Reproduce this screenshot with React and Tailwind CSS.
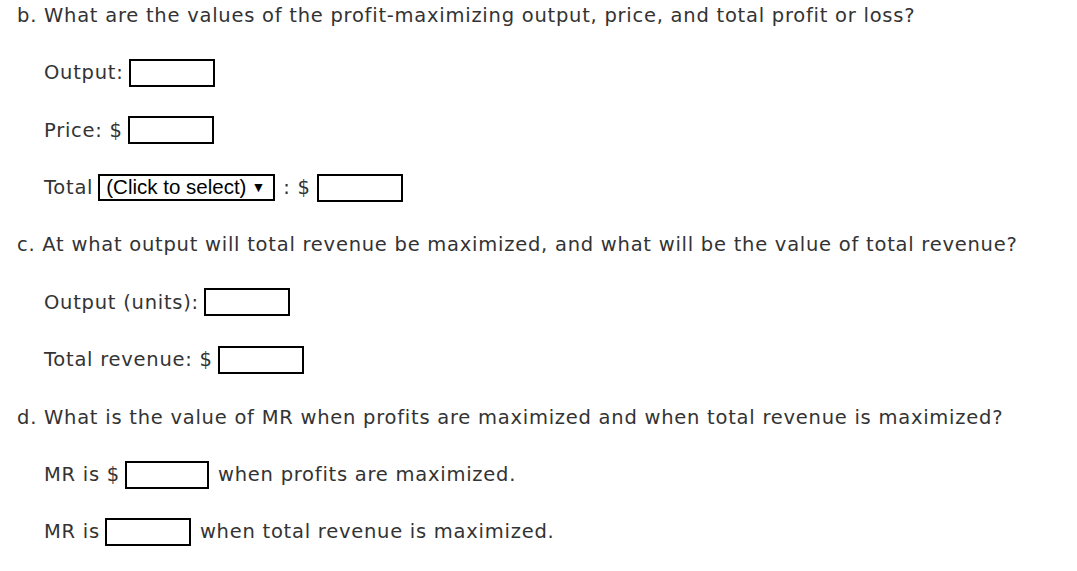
import React from 'react';

const Box = ({ w = 'w-[86px]' }) => (
    <span className={`inline-block ${w} h-[28px] border-2 border-black bg-white`} />
);

const Row = ({ indent = true, children }) => (
    <div className={`h-[29px] flex items-center whitespace-nowrap ${indent ? 'pl-[44px]' : 'pl-[17px]'}`}>
        {children}
    </div>
);

const App = () => {
    return (
        <div
            className="w-[1077px] h-[571px] bg-white text-[#333] text-[19.5px] tracking-[0.75px] flex flex-col gap-[28.4px] pt-[1px]"
            style={{ fontFamily: '"DejaVu Sans", sans-serif' }}
        >
            <Row indent={false}>b. What are the values of the profit-maximizing output, price, and total profit or loss?</Row>
            <Row>
                <span className="mr-[5px]">Output:</span>
                <Box />
            </Row>
            <Row>
                <span className="mr-[5px]">Price: $</span>
                <Box />
            </Row>
            <Row>
                <span className="mr-[5px]">Total</span>
                <span
                    className="inline-flex items-center justify-between h-[27px] w-[177px] border-2 border-black pl-[6px] pr-[8px] text-black text-[20.5px] tracking-normal"
                    style={{ fontFamily: '"Liberation Sans", Arial, sans-serif' }}
                >
                    (Click to select)
                    <span className="text-[14px]">▼</span>
                </span>
                <span className="ml-[8px] mr-[6px]">: $</span>
                <Box />
            </Row>
            <Row indent={false}>c. At what output will total revenue be maximized, and what will be the value of total revenue?</Row>
            <Row>
                <span className="mr-[5px]">Output (units):</span>
                <Box />
            </Row>
            <Row>
                <span className="mr-[5px]">Total revenue: $</span>
                <Box />
            </Row>
            <Row indent={false}>d. What is the value of MR when profits are maximized and when total revenue is maximized?</Row>
            <Row>
                <span className="mr-[5px]">MR is $</span>
                <Box w="w-[84px]" />
                <span className="ml-[9px]">when profits are maximized.</span>
            </Row>
            <Row>
                <span className="mr-[5px]">MR is</span>
                <Box w="w-[86px]" />
                <span className="ml-[9px]">when total revenue is maximized.</span>
            </Row>
        </div>
    );
};

export default App;
